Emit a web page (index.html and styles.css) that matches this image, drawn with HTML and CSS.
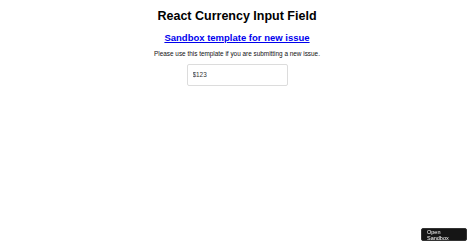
FILE: index.html
```html
<!DOCTYPE html>
<html>
<head>
<meta charset="utf-8">
<link rel="stylesheet" href="styles.css">
</head>
<body>
<div class="app">
  <h1 class="title">React Currency Input Field</h1>
  <h2 class="subtitle"><a class="link" href="#">Sandbox template for new issue</a></h2>
  <p class="note">Please use this template if you are submitting a new issue.</p>
  <input class="currency" type="text" value="$123">
</div>
<a class="open-sandbox" href="#">Open<br>Sandbox</a>
</body>
</html>
```
FILE: styles.css
```css
html, body {
  height: 100%;
}
body {
  margin: 0;
  padding: 3px 0 0;
  background: #fff;
  font-family: "Liberation Sans", Arial, sans-serif;
  color: #000;
  box-sizing: border-box;
}
.app {
  display: flex;
  flex-direction: column;
  align-items: center;
  text-align: center;
}
.title {
  font-size: 12.5px;
  font-weight: bold;
  margin: 5.5px 0 0;
  line-height: 15px;
}
.subtitle {
  font-size: 9.5px;
  font-weight: bold;
  margin: 8px 0 0;
  line-height: 11px;
}
.link {
  color: #0000ee;
  text-decoration: underline;
}
.note {
  font-size: 6.4px;
  margin: 7px 0 0;
  line-height: 7px;
  color: #111;
}
.currency {
  margin-top: 7px;
  width: 101px;
  height: 22px;
  box-sizing: border-box;
  border: 1px solid #dcdcdc;
  border-radius: 2px;
  padding: 0 5px;
  font-family: "Liberation Sans", Arial, sans-serif;
  font-size: 6.4px;
  color: #333;
  outline: none;
}
.open-sandbox {
  position: fixed;
  right: 7px;
  bottom: 7px;
  width: 46px;
  height: 13px;
  box-sizing: border-box;
  padding: 1px 0 0 5px;
  background: #151515;
  border: 1px solid #333;
  border-radius: 2px;
  color: #fff;
  font-size: 5.5px;
  line-height: 5.5px;
  text-align: left;
  text-decoration: none;
}
```
